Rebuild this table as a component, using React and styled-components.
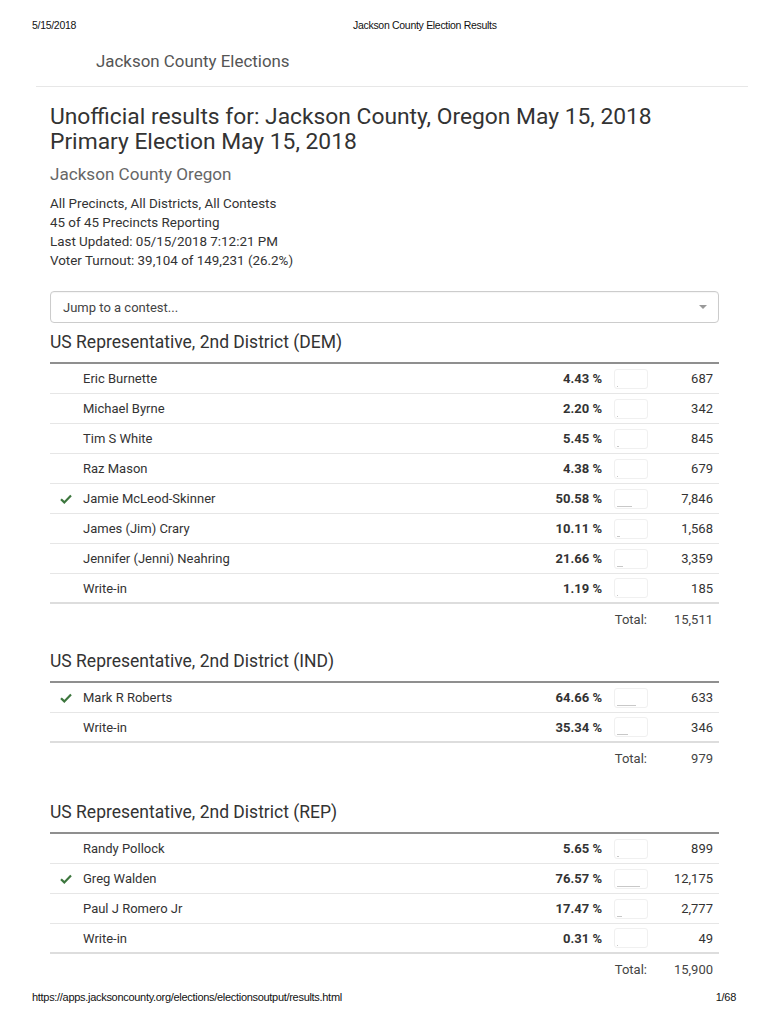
import React from 'react';
import styled, { createGlobalStyle } from 'styled-components';

const GlobalStyle = createGlobalStyle`
    html, body {
        margin: 0;
        padding: 0;
        background: #fff;
    }
    body {
        font-family: Roboto, "Liberation Sans", sans-serif;
        color: #333;
    }
`

const Page = styled.div`
    width: 768px;
    height: 1024px;
    display: flex;
    flex-direction: column;
    box-sizing: border-box;
    overflow: hidden;
`

const PrintBar = styled.div`
    display: flex;
    align-items: center;
    padding: 0 32px;
    height: 18px;
    margin-top: 16px;
    font-family: "Liberation Sans", Arial, sans-serif;
    font-size: 10.5px;
    letter-spacing: -0.3px;
    color: #111;
`

const PrintTitle = styled.span`
    margin-left: 277px;
`

const Brand = styled.div`
    margin: 17px 0 0 96px;
    font-size: 16.9px;
    color: #555;
    line-height: 20px;
`

const Rule = styled.hr`
    margin: 15px 20px 0 36px;
    border: 0;
    border-top: 1px solid #e7e7e7;
`

const Main = styled.div`
    padding: 0 49px 0 50px;
`

const Title = styled.h1`
    margin: 17px 0 0 0;
    font-size: 22.8px;
    font-weight: 400;
    line-height: 25px;
    color: #333;
`

const Subtitle = styled.div`
    margin-top: 10px;
    font-size: 17.1px;
    line-height: 20px;
    color: #666;
`

const Info = styled.div`
    margin-top: 10px;
    font-size: 13.4px;
    line-height: 19px;
    color: #333;
`

const Select = styled.div`
    margin-top: 21px;
    height: 32px;
    border: 1px solid #ccc;
    border-radius: 4px;
    box-sizing: border-box;
    display: flex;
    align-items: center;
    justify-content: space-between;
    padding: 0 11px 0 12px;
    font-size: 13px;
    color: #444;
    box-shadow: inset 0 1px 1px rgba(0,0,0,0.04);
`

const Caret = styled.span`
    width: 0;
    height: 0;
    border-left: 4px solid transparent;
    border-right: 4px solid transparent;
    border-top: 4px solid #999;
`

const ContestTitle = styled.h2`
    margin: ${p => p.$gap}px 0 0 0;
    font-size: 17.5px;
    font-weight: 400;
    line-height: 21px;
    color: #333;
`

const Table = styled.div`
    margin-top: 9px;
    border-top: 2px solid #8f8f8f;
`

const Row = styled.div`
    display: grid;
    grid-template-columns: 33px 1fr 90px 46px 65px;
    align-items: center;
    height: 30px;
    box-sizing: border-box;
    border-bottom: ${p => p.$last ? '2px solid #ddd' : '1px solid #e6e6e6'};
    font-size: 13px;
    color: #333;
    padding-right: 6px;
`

const TotalRow = styled(Row)`
    border-bottom: 0;
    color: #444;
`

const Check = styled.span`
    display: flex;
    justify-content: flex-end;
    padding-right: 11px;
    color: #3c763d;
`

const Pct = styled.span`
    text-align: right;
    font-weight: 700;
    color: #333;
`

const Votes = styled.span`
    text-align: right;
`

const TotalLabel = styled.span`
    grid-column: 4;
    text-align: right;
    padding-right: 1px;
`

const BarBox = styled.div`
    justify-self: end;
    position: relative;
    width: 34px;
    height: 20px;
    border: 1px solid #f0f0f0;
    border-radius: 3px;
    box-sizing: border-box;
    overflow: hidden;
`

const BarFill = styled.div`
    position: absolute;
    left: 2px;
    bottom: 1px;
    height: 1px;
    background: #c8c8c8;
`

const Footer = styled.div`
    margin-top: auto;
    margin-bottom: 21px;
    display: flex;
    justify-content: space-between;
    padding: 0 32px;
    font-family: "Liberation Sans", Arial, sans-serif;
    font-size: 11px;
    letter-spacing: -0.3px;
    color: #111;
`

const CheckIcon = () => (
    <svg width="12" height="10" viewBox="0 0 12 10">
        <path d="M1 5.2 L4.3 8.4 L11 1.6" fill="none" stroke="currentColor" strokeWidth="2.2" />
    </svg>
)

const contests = [
    {
        title: 'US Representative, 2nd District (DEM)',
        gap: 9,
        total: '15,511',
        rows: [
            ['Eric Burnette', '4.43', '687'],
            ['Michael Byrne', '2.20', '342'],
            ['Tim S White', '5.45', '845'],
            ['Raz Mason', '4.38', '679'],
            ['Jamie McLeod-Skinner', '50.58', '7,846', true],
            ['James (Jim) Crary', '10.11', '1,568'],
            ['Jennifer (Jenni) Neahring', '21.66', '3,359'],
            ['Write-in', '1.19', '185'],
        ],
    },
    {
        title: 'US Representative, 2nd District (IND)',
        gap: 17,
        total: '979',
        rows: [
            ['Mark R Roberts', '64.66', '633', true],
            ['Write-in', '35.34', '346'],
        ],
    },
    {
        title: 'US Representative, 2nd District (REP)',
        gap: 29,
        total: '15,900',
        rows: [
            ['Randy Pollock', '5.65', '899'],
            ['Greg Walden', '76.57', '12,175', true],
            ['Paul J Romero Jr', '17.47', '2,777'],
            ['Write-in', '0.31', '49'],
        ],
    },
];

function App() {
    return (
        <Page>
            <GlobalStyle />
            <PrintBar>
                <span>5/15/2018</span>
                <PrintTitle>Jackson County Election Results</PrintTitle>
            </PrintBar>
            <Brand>Jackson County Elections</Brand>
            <Rule />
            <Main>
                <Title>Unofficial results for: Jackson County, Oregon May 15, 2018<br />Primary Election May 15, 2018</Title>
                <Subtitle>Jackson County Oregon</Subtitle>
                <Info>
                    <div>All Precincts, All Districts, All Contests</div>
                    <div>45 of 45 Precincts Reporting</div>
                    <div>Last Updated: 05/15/2018 7:12:21 PM</div>
                    <div>Voter Turnout: 39,104 of 149,231 (26.2%)</div>
                </Info>
                <Select>
                    <span>Jump to a contest...</span>
                    <Caret />
                </Select>
                {contests.map(c => (
                    <div key={c.title}>
                        <ContestTitle $gap={c.gap}>{c.title}</ContestTitle>
                        <Table>
                            {c.rows.map(([name, pct, votes, won], i) => (
                                <Row key={name} $last={i === c.rows.length - 1}>
                                    <Check>{won && <CheckIcon />}</Check>
                                    <span>{name}</span>
                                    <Pct>{pct} %</Pct>
                                    <BarBox>
                                        <BarFill style={{ width: `${parseFloat(pct) * 0.3}px` }} />
                                    </BarBox>
                                    <Votes>{votes}</Votes>
                                </Row>
                            ))}
                            <TotalRow>
                                <TotalLabel>Total:</TotalLabel>
                                <Votes>{c.total}</Votes>
                            </TotalRow>
                        </Table>
                    </div>
                ))}
            </Main>
            <Footer>
                <span>https://apps.jacksoncounty.org/elections/electionsoutput/results.html</span>
                <span>1/68</span>
            </Footer>
        </Page>
    );
}

export default App;
